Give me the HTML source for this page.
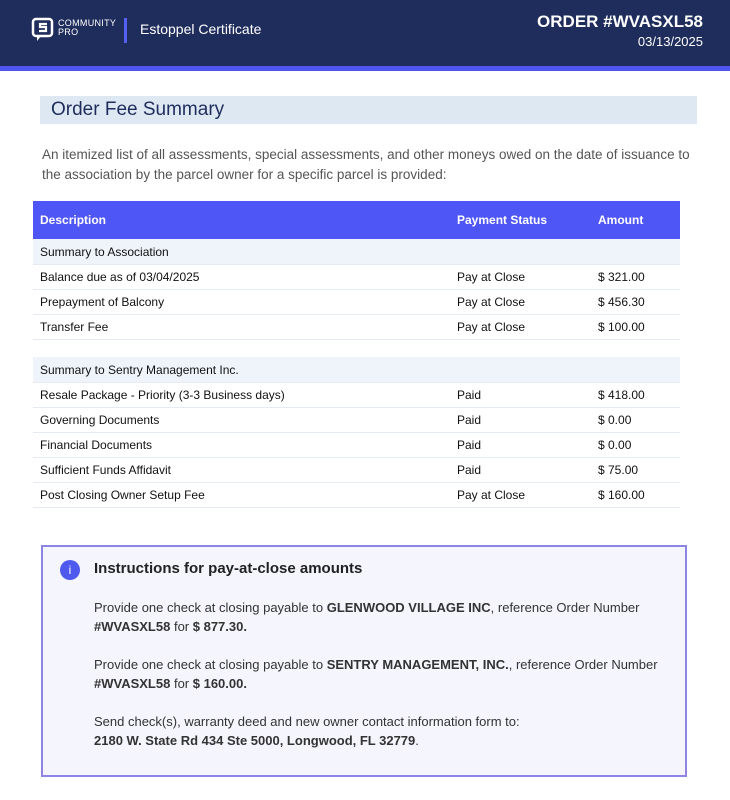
<!DOCTYPE html>
<html><head><meta charset="utf-8"><style>
*{margin:0;padding:0;box-sizing:border-box}
body{width:730px;height:800px;background:#fff;font-family:"Liberation Sans",sans-serif;color:#222;position:relative;overflow:hidden}
.hdr{position:absolute;left:0;top:0;width:730px;height:66px;background:#1f2d5c}
.strip{position:absolute;left:0;top:66px;width:730px;height:5px;background:#4f56f0}
.abs{position:absolute}
.title{left:40px;top:96px;width:657px;height:28px;background:#dde8f3;font-size:19px;color:#1f2d5c;padding:3px 0 0 11px}
.intro{left:42px;top:145px;width:650px;font-size:13.5px;line-height:20px;color:#555}
table{position:absolute;left:33px;top:201px;width:647px;border-collapse:collapse;font-size:12px;color:#111}
th{background:#4f56f6;color:#fff;text-align:left;font-weight:bold;height:38px;padding-left:7px}
td{height:25px;padding-left:7px;border-bottom:1px solid #e6ebf2;padding-top:1px}
td.s{background:#eef4fa}
.box{left:41px;top:545px;width:646px;height:232px;border:2px solid #8c84e6;background:#f5f5fd}
.box p{position:absolute;left:51px;font-size:13px;line-height:19px;color:#333;width:590px}
</style></head><body>
<div class="hdr"></div><div class="strip"></div>
<svg class="abs" style="left:31px;top:17px" width="24" height="26" viewBox="0 0 24 26"><rect x="2" y="2" width="19" height="17" rx="3" fill="none" stroke="#fff" stroke-width="2.5"/><path d="M16 7H9v3h6v4H8" fill="none" stroke="#fff" stroke-width="2.2"/><path d="M6 19v5l4-5" fill="#fff"/></svg>
<div class="abs" style="left:58px;top:19px;color:#fff;font-size:9px;line-height:9px;letter-spacing:.3px">COMMUNITY<br>PRO</div>
<div class="abs" style="left:124px;top:18px;width:3px;height:25px;background:#5560f0"></div>
<div class="abs" style="left:140px;top:21px;color:#fff;font-size:14px">Estoppel Certificate</div>
<div class="abs" style="right:27px;top:12px;color:#fff;font-size:17px;font-weight:bold">ORDER #WVASXL58</div>
<div class="abs" style="right:27px;top:34px;color:#fff;font-size:13px">03/13/2025</div>
<div class="abs title">Order Fee Summary</div>
<div class="abs intro">An itemized list of all assessments, special assessments, and other moneys owed on the date of issuance to the association by the parcel owner for a specific parcel is provided:</div>
<table>
<tr><th style="width:417px">Description</th><th style="width:141px">Payment Status</th><th>Amount</th></tr>
<tr><td class="s" colspan="3">Summary to Association</td></tr>
<tr><td>Balance due as of 03/04/2025</td><td>Pay at Close</td><td>$ 321.00</td></tr>
<tr><td>Prepayment of Balcony</td><td>Pay at Close</td><td>$ 456.30</td></tr>
<tr><td>Transfer Fee</td><td>Pay at Close</td><td>$ 100.00</td></tr>
<tr><td colspan="3" style="height:18px;border:none"></td></tr>
<tr><td class="s" colspan="3">Summary to Sentry Management Inc.</td></tr>
<tr><td>Resale Package - Priority (3-3 Business days)</td><td>Paid</td><td>$ 418.00</td></tr>
<tr><td>Governing Documents</td><td>Paid</td><td>$ 0.00</td></tr>
<tr><td>Financial Documents</td><td>Paid</td><td>$ 0.00</td></tr>
<tr><td>Sufficient Funds Affidavit</td><td>Paid</td><td>$ 75.00</td></tr>
<tr><td>Post Closing Owner Setup Fee</td><td>Pay at Close</td><td>$ 160.00</td></tr>
</table>
<div class="abs box">
<div class="abs" style="left:17px;top:13px;width:20px;height:20px;border-radius:50%;background:#5059ee;color:#fff;font-size:12px;text-align:center;line-height:20px">i</div>
<div class="abs" style="left:51px;top:13px;font-size:15px;font-weight:bold;color:#222">Instructions for pay-at-close amounts</div>
<p style="top:51px">Provide one check at closing payable to <b>GLENWOOD VILLAGE INC</b>, reference Order Number <b>#WVASXL58</b> for <b>$ 877.30.</b></p>
<p style="top:108px">Provide one check at closing payable to <b>SENTRY MANAGEMENT, INC.</b>, reference Order Number <b>#WVASXL58</b> for <b>$ 160.00.</b></p>
<p style="top:165px">Send check(s), warranty deed and new owner contact information form to:<br><b>2180 W. State Rd 434 Ste 5000, Longwood, FL 32779</b>.</p>
</div>
</body></html>
